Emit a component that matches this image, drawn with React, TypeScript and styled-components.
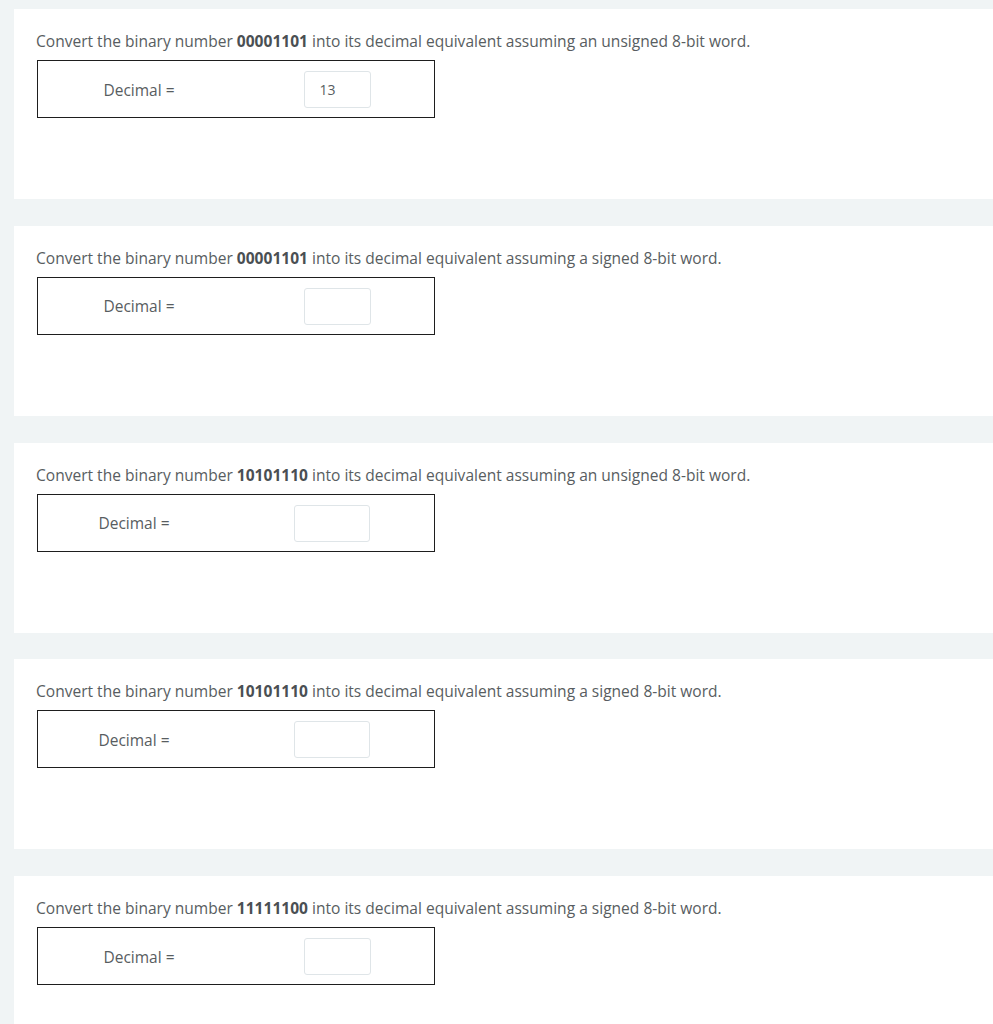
import React from 'react';
import styled, { createGlobalStyle } from 'styled-components';

const GlobalStyle = createGlobalStyle`
    html, body {
        margin: 0;
        padding: 0;
        background: #f0f4f5;
    }
    body {
        font-family: "Open Sans", "Liberation Sans", sans-serif;
        color: #585d61;
    }
`;

const Page = styled.div`
    padding: 9px 0 0 14px;
    display: flex;
    flex-direction: column;
    gap: 26.75px;
`;

const QuestionCard = styled.section`
    background: #fff;
    height: 190px;
    padding: 22px 0 0 22px;
    box-sizing: border-box;
`;

const Prompt = styled.p`
    margin: 0;
    font-size: 15.55px;
    line-height: 21px;

    b {
        font-weight: 700;
        color: #4a4f53;
    }
`;

const AnswerBox = styled.div`
    margin-top: 8px;
    margin-left: 1px;
    width: 398px;
    height: 58px;
    box-sizing: border-box;
    border: 1.5px solid #1e1e1e;
    display: flex;
    align-items: center;
    padding-top: 1px;
`;

const LabelCell = styled.div<{ $width: number }>`
    width: ${props => props.$width}px;
    text-align: center;
    font-size: 15.5px;
`;

const InputCell = styled.div`
    flex: 1;
    display: flex;
    justify-content: center;
`;

const AnswerInput = styled.input<{ $width: number }>`
    width: ${props => props.$width}px;
    height: 37px;
    box-sizing: border-box;
    border: 1px solid #dfe5e8;
    border-radius: 3px;
    padding: 0 0 0 15px;
    font-family: inherit;
    font-size: 14px;
    color: #585d61;
    background: #fff;
    outline: none;
`;

type Question = {
    binary: string;
    kind: string;
    value: string;
    labelWidth: number;
    inputWidth: number;
};

const questions: Question[] = [
    { binary: '00001101', kind: 'an unsigned', value: '13', labelWidth: 202, inputWidth: 67 },
    { binary: '00001101', kind: 'a signed', value: '', labelWidth: 202, inputWidth: 67 },
    { binary: '10101110', kind: 'an unsigned', value: '', labelWidth: 192, inputWidth: 76 },
    { binary: '10101110', kind: 'a signed', value: '', labelWidth: 192, inputWidth: 76 },
    { binary: '11111100', kind: 'a signed', value: '', labelWidth: 202, inputWidth: 67 },
];

export default function App() {
    return (
        <>
            <GlobalStyle />
            <Page>
                {questions.map((q, i) => (
                    <QuestionCard key={i}>
                        <Prompt>
                            Convert the binary number <b>{q.binary}</b> into its decimal equivalent assuming {q.kind} 8-bit word.
                        </Prompt>
                        <AnswerBox>
                            <LabelCell $width={q.labelWidth}>Decimal =</LabelCell>
                            <InputCell>
                                <AnswerInput $width={q.inputWidth} defaultValue={q.value} />
                            </InputCell>
                        </AnswerBox>
                    </QuestionCard>
                ))}
            </Page>
        </>
    );
}
